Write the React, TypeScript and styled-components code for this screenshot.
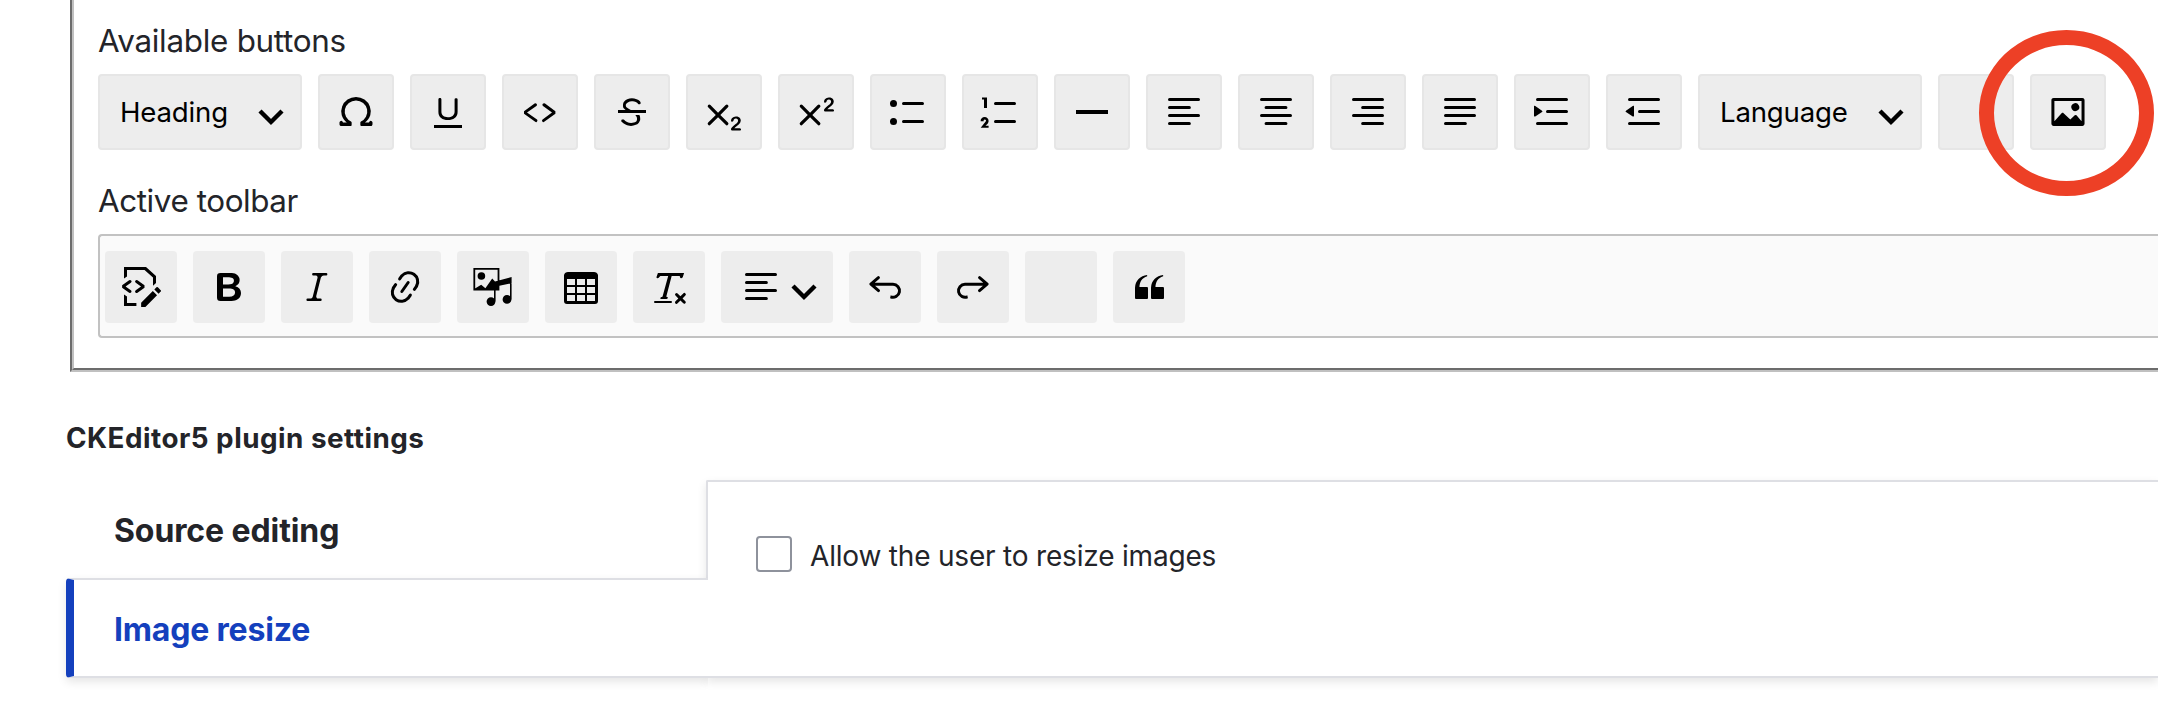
import React from "react";
import styled, { createGlobalStyle } from "styled-components";

const GlobalStyle = createGlobalStyle`
  * { box-sizing: border-box; }
  html, body { margin: 0; background: #fff; overflow: hidden; }
  body { font-family: Inter, "Liberation Sans", sans-serif; color: #232429; }
`;

const Page = styled.main`
  position: relative;
  width: 2158px;
  height: 710px;
  overflow: hidden;
  padding-left: 66px;
`;

const ToolbarGroup = styled.section`
  margin-left: 4px;
  height: 372px;
  padding: 21px 0 0 24px;
  border-left: 4px groove #c0c0c0;
  border-bottom: 4px groove #c0c0c0;
`;

const GroupLabel = styled.div<{ $spacing: number }>`
  font-size: 31.4px;
  line-height: 40px;
  letter-spacing: ${(p) => p.$spacing}px;
  white-space: nowrap;
`;

const AvailableRow = styled.div`
  display: flex;
  gap: 16px;
  margin: 13px 0 31px;
`;

const ToolButton = styled.button<{ $width?: number }>`
  flex: none;
  display: flex;
  align-items: center;
  width: ${(p) => p.$width ?? 76}px;
  height: 76px;
  margin: 0;
  padding: 0 16px;
  color: #000;
  font: 27.6px Inter, "Liberation Sans", sans-serif;
  background: #ededed;
  border: 2px solid #e6e6e6;
  border-radius: 4px;
`;

const DropdownButton = styled(ToolButton)`
  justify-content: space-between;
  padding: 0 16px 0 20px;
  letter-spacing: -0.18px;
`;

const ActiveBar = styled.div`
  display: flex;
  gap: 16px;
  height: 104px;
  margin-top: 13px;
  padding: 15px 5px 13px;
  background: #fafafa;
  border: 2px solid #c2c2c2;
  border-right: 0;
  border-radius: 4px 0 0 4px;
`;

const ActiveButton = styled(ToolButton)`
  height: 72px;
  width: ${(p) => p.$width ?? 72}px;
  border: 0;
`;

const AlignDropdown = styled(ActiveButton)`
  justify-content: space-between;
  padding: 0 16px 0 20px;
`;

const Icon = styled.svg`
  flex: none;
  display: block;
  width: 40px;
  height: 40px;
`;

const ChevronIcon = styled.svg`
  flex: none;
  display: block;
  width: 26px;
  height: 18px;
  margin-top: 9px;
`;

const SettingsTitle = styled.h3`
  margin: 47px 0 23px;
  font-size: 27.8px;
  line-height: 38px;
  font-weight: 700;
  letter-spacing: 0.5px;
`;

const Settings = styled.section`
  display: flex;
  height: 198px;
`;

const TabList = styled.div`
  position: relative;
  z-index: 1;
  width: 642px;
  margin-right: -2px;
`;

const Tab = styled.div<{ $active?: boolean }>`
  display: flex;
  align-items: center;
  height: ${(p) => (p.$active ? 100 : 98)}px;
  padding-left: ${(p) => (p.$active ? 40 : 48)}px;
  padding-top: 2px;
  font-size: 32px;
  font-weight: 700;
  letter-spacing: ${(p) => (p.$active ? -0.18 : -0.1)}px;
  color: ${(p) => (p.$active ? "#1440bd" : "#232429")};
  ${(p) =>
    p.$active &&
    `
    background: #fff;
    border: 2px solid #dedfe4;
    border-left: 8px solid #1440bd;
    border-right: 0;
    border-radius: 4px 0 0 4px;
    box-shadow: 0 4px 10px rgba(0, 0, 0, 0.1);
    clip-path: inset(-8px 0 -20px -20px);
  `}
`;

const Panel = styled.div`
  flex: 1;
  height: 198px;
  padding: 54px 0 0 48px;
  background: #fff;
  border: 2px solid #dedfe4;
  border-right: 0;
  border-radius: 2px 0 0 0;
  box-shadow: 0 4px 10px rgba(0, 0, 0, 0.1);
`;

const CheckRow = styled.label`
  display: flex;
  gap: 18px;
  font-size: 28px;
  line-height: 40px;
  letter-spacing: -0.19px;
`;

const Checkbox = styled.input`
  appearance: none;
  width: 36px;
  height: 36px;
  margin: 0;
  background: #fff;
  border: 2px solid #8e929c;
  border-radius: 4px;
`;

const Highlight = styled.div`
  position: absolute;
  left: 1979px;
  top: 30px;
  width: 175px;
  height: 166px;
  border: 15px solid #ed4026;
  border-radius: 50%;
`;

const TWO =
  "h2.549c.254 0 .447.05.58.152a.49.49 0 0 1 .201.413.54.54 0 0 1-.159.393c-.105.108-.266.162-.48.162h-3.594c-.245 0-.435-.066-.572-.197a.621.621 0 0 1-.205-.463c0-.114.044-.265.132-.453a1.62 1.62 0 0 1 .288-.444c.433-.436.824-.81 1.172-1.122.348-.312.597-.517.747-.615.267-.183.49-.368.667-.553.177-.185.312-.375.405-.57.093-.194.139-.384.139-.57a1.008 1.008 0 0 0-.554-.917 1.197 1.197 0 0 0-.56-.133c-.426 0-.761.182-1.005.546a2.332 2.332 0 0 0-.164.39 1.609 1.609 0 0 1-.258.488c-.096.114-.237.17-.423.17a.558.558 0 0 1-.405-.156.568.568 0 0 1-.161-.427c0-.218.05-.446.151-.683.101-.238.252-.453.452-.646s.454-.349.762-.467a2.998 2.998 0 0 1 1.081-.178c.498 0 .923.076 1.274.228a1.916 1.916 0 0 1 1.004 1.032 1.984 1.984 0 0 1-.156 1.794c-.2.32-.405.572-.613.754-.208.182-.558.468-1.048.857-.49.39-.826.691-1.008.906a2.703 2.703 0 0 0-.24.309z";
const CROSS =
  "m7.03 10.349 3.818-3.819a.8.8 0 1 1 1.132 1.132L8.16 11.48l3.819 3.818a.8.8 0 1 1-1.132 1.132L7.03 12.61l-3.818 3.82a.8.8 0 1 1-1.132-1.132L5.9 11.48 2.08 7.662A.8.8 0 1 1 3.212 6.53l3.818 3.82z";

const bar = (x1: number, x2: number, y: number) =>
  `M${x1 + 0.75} ${y - 0.75}H${x2 - 0.75}a.75.75 0 0 1 0 1.5H${x1 + 0.75}a.75.75 0 0 1 0-1.5z`;

const dot = (cx: number, cy: number, r: number) =>
  `M${cx - r} ${cy}a${r} ${r} 0 1 1 ${2 * r} 0 ${r} ${r} 0 1 1 ${-2 * r} 0z`;

const paths = {
  omega:
    "M10 2.5a7.47 7.47 0 0 1 4.231 1.31 7.268 7.268 0 0 1 2.703 3.454 7.128 7.128 0 0 1 .199 4.353c-.39 1.436-1.475 2.72-2.633 3.677h2.013c0-.226.092-.443.254-.603a.876.876 0 0 1 1.229 0c.163.16.254.377.254.603v.853c0 .209-.078.41-.22.567a.873.873 0 0 1-.547.28l-.101.006h-4.695a.517.517 0 0 1-.516-.518v-1.265c0-.21.128-.398.317-.489a5.601 5.601 0 0 0 2.492-2.371 5.459 5.459 0 0 0 .552-3.693 5.53 5.53 0 0 0-1.955-3.2A5.71 5.71 0 0 0 10 4.206 5.708 5.708 0 0 0 6.419 5.46 5.527 5.527 0 0 0 4.46 8.663a5.457 5.457 0 0 0 .554 3.695 5.6 5.6 0 0 0 2.497 2.37.55.55 0 0 1 .317.493v1.264c0 .286-.23.518-.516.518H2.618a.877.877 0 0 1-.614-.25.845.845 0 0 1-.254-.603v-.853c0-.226.091-.443.254-.603a.876.876 0 0 1 1.228 0c.163.16.255.377.255.603h1.925c-1.158-.958-2.155-2.241-2.545-3.678a7.128 7.128 0 0 1 .199-4.352 7.268 7.268 0 0 1 2.703-3.455A7.475 7.475 0 0 1 10 2.5z",
  underline:
    "M3 18v-1.5h14V18H3zm2.2-8V3.6c0-.4.4-.6.8-.6.3 0 .7.2.7.6v6.2c0 2 1.3 2.8 3.2 2.8 1.9 0 3.4-.9 3.4-2.9V3.6c0-.3.4-.5.8-.5.3 0 .7.2.7.5V10c0 2.7-2.2 4-4.9 4-2.6 0-4.7-1.2-4.7-4z",
  code: "m12.5 5.7 5.2 3.9v1.3l-5.6 4c-.1.2-.3.2-.5.2-.3-.1-.6-.7-.6-1l.3-.4 4.7-3.5L11.5 7l-.2-.2c-.1-.3-.1-.6 0-.8.2-.2.5-.4.8-.4a.8.8 0 0 1 .4.1zm-5.2 0L2 9.6v1.3l5.6 4c.1.2.3.2.5.2.3-.1.7-.7.6-1 0-.1 0-.3-.2-.4l-5-3.5L8.2 7l.2-.2c.1-.3.1-.6 0-.8-.2-.2-.5-.4-.8-.4a.8.8 0 0 0-.3.1z",
  strike:
    "M7 16.4c-.8-.4-1.5-.9-2.2-1.5a.6.6 0 0 1-.2-.5l.3-.6h1c1 1.2 2.1 1.7 3.7 1.7 1 0 1.8-.3 2.3-.6.6-.4.6-1.2.6-1.3.2-1.2-.9-2.1-.9-2.1h2.1c.3.7.4 1.2.4 1.7v.8l-.6 1.2c-.6.8-1.1 1-1.6 1.2a6 6 0 0 1-2.4.6c-1 0-1.8-.3-2.5-.6zM6.8 9 6 8.3c-.4-.5-.5-.8-.5-1.6 0-.7.1-1.3.5-1.8.4-.6 1-1 1.6-1.3a6.3 6.3 0 0 1 4.7 0 4 4 0 0 1 1.7 1l.3.7c0 .1.2.4-.2.7-.4.2-.9.1-1 0a3 3 0 0 0-1.2-1c-.4-.2-1-.3-2-.4-.7 0-1.4.2-2 .6-.8.6-1 .8-1 1.5 0 .8.5 1 1.2 1.5.6.4 1.1.7 1.9 1H6.8zM3 10.5V9h14v1.5z",
  subscript: CROSS + "M15.177 18.178" + TWO,
  superscript: CROSS + "M15.677 8.678" + TWO,
  bulleted: bar(7, 18, 5.75) + bar(7, 18, 14.75) + dot(2.75, 5.75, 1.75) + dot(2.75, 14.75, 1.75),
  numbered:
    bar(7, 18, 5.75) + bar(7, 18, 14.75) +
    "M3.5 3v5H2V3.7H1v-1h2.5V3zM.343 17.857l2.59-3.257H2.92a.6.6 0 1 0-1.04 0H.302a2 2 0 1 1 3.995 0h-.001c-.048.405-.16.734-.333.988-.175.254-.59.692-1.244 1.312H4.3v1h-4l.043-.043z",
  rule: "M2 9h16v2H2z",
  alignLeft: bar(2, 18, 3.75) + bar(2, 13.43, 7.75) + bar(2, 18, 11.75) + bar(2, 13.43, 15.75),
  alignCenter: bar(2, 18, 3.75) + bar(4.28, 15.72, 7.75) + bar(2, 18, 11.75) + bar(4.28, 15.72, 15.75),
  alignRight: bar(2, 18, 3.75) + bar(6.57, 18, 7.75) + bar(2, 18, 11.75) + bar(6.57, 18, 15.75),
  justify: bar(2, 18, 3.75) + bar(2, 18, 7.75) + bar(2, 18, 11.75) + bar(2, 13.43, 15.75),
  indent:
    bar(2, 18, 3.75) + bar(7, 18, 9.75) + bar(2, 18, 15.75) +
    "M1.632 6.95 5.02 9.358a.4.4 0 0 1-.013.661l-3.39 2.207A.4.4 0 0 1 1 11.892V7.275a.4.4 0 0 1 .632-.326z",
  outdent:
    bar(2, 18, 3.75) + bar(7, 18, 9.75) + bar(2, 18, 15.75) +
    "M4.368 6.95.98 9.358a.4.4 0 0 0 .013.661l3.39 2.207A.4.4 0 0 0 5 11.892V7.275a.4.4 0 0 0-.632-.326z",
  image:
    "M6.91 10.54c.26-.23.64-.21.88.03l3.36 3.14 2.23-2.06a.64.64 0 0 1 .87 0l2.52 2.97V4.5H3.2v10.12l3.71-4.08zm10.27-7.51c.6 0 1.09.47 1.09 1.05v11.84c0 .59-.49 1.06-1.09 1.06H2.79c-.6 0-1.09-.47-1.09-1.06V4.08c0-.58.49-1.05 1.1-1.05h14.38zm-5.22 5.56a1.96 1.96 0 1 1 3.4-1.96 1.96 1.96 0 0 1-3.4 1.96z",
  source:
    "M1.5 0h11l5 4.5v3.5L16 9.43V5.2L11.77 1.5H3v3.25l-1.5 1zM1.5 13.75l1.5 1V18h4.7v1.5H1.5zM4.06 6.64a.75.75 0 0 1 .958 1.15l-.085.07L2.29 9.75l2.646 1.89c.302.216.4.62.232.951l-.058.095a.75.75 0 0 1-.951.232l-.095-.058-3.5-2.5V9.14l3.496-2.5zm4.194 6.22a.75.75 0 0 1-.958-1.149l.085-.07 2.643-1.89-2.646-1.89a.75.75 0 0 1-.232-.952l.058-.095a.75.75 0 0 1 .95-.232l.096.058 3.5 2.5v1.22l-3.496 2.5zm7.644-.836 2.122 2.122-5.825 5.809-2.125-.005.003-2.116zm2.539-1.847 1.414 1.414a.5.5 0 0 1 0 .707l-1.06 1.06-2.122-2.12 1.061-1.061a.5.5 0 0 1 .707 0z",
  bold: "M10.187 17H5.773c-.637 0-1.092-.138-1.364-.415-.273-.277-.409-.718-.409-1.323V4.738c0-.617.14-1.062.419-1.332.279-.27.73-.406 1.354-.406h4.68c.69 0 1.288.041 1.793.124.506.083.96.242 1.36.478.341.197.644.447.906.75a3.262 3.262 0 0 1 .808 2.162c0 1.401-.722 2.426-2.167 3.075C15.05 10.175 16 11.315 16 13.01a3.756 3.756 0 0 1-2.296 3.504 6.1 6.1 0 0 1-1.517.377c-.571.073-1.238.11-2 .11zm-.217-6.217H7v4.087h3.069c1.977 0 2.965-.69 2.965-2.072 0-.707-.256-1.22-.768-1.537-.512-.319-1.277-.478-2.296-.478zM7 5.13v3.619h2.606c.729 0 1.292-.067 1.69-.2a1.6 1.6 0 0 0 .91-.765c.165-.267.247-.566.247-.897 0-.707-.26-1.176-.778-1.409-.519-.232-1.31-.348-2.375-.348H7z",
  italic:
    "m9.586 14.633.021.004c-.036.335.095.655.393.962.082.083.173.15.274.201h1.474a.6.6 0 1 1 0 1.2H5.304a.6.6 0 0 1 0-1.2h1.15c.474-.07.809-.182 1.005-.334.157-.122.291-.32.404-.597l2.416-9.55a1.053 1.053 0 0 0-.281-.823 1.12 1.12 0 0 0-.442-.296H8.15a.6.6 0 0 1 0-1.2h6.443a.6.6 0 1 1 0 1.2h-1.195c-.376.056-.65.155-.823.296-.215.175-.423.439-.623.79l-2.366 9.347z",
  link: "m11.077 15 .991-1.416a.75.75 0 1 1 1.229.86l-1.148 1.64a.748.748 0 0 1-.217.206 5.251 5.251 0 0 1-8.503-5.955.741.741 0 0 1 .12-.274l1.147-1.639a.75.75 0 1 1 1.228.86L4.933 10.7l.006.003a3.75 3.75 0 0 0 6.132 4.294l.006.004zm5.494-5.335a.748.748 0 0 1-.12.274l-1.147 1.639a.75.75 0 1 1-1.228-.86l.86-1.23a3.75 3.75 0 0 0-6.144-4.301l-.86 1.229a.75.75 0 0 1-1.229-.86l1.148-1.64a.748.748 0 0 1 .217-.206 5.251 5.251 0 0 1 8.503 5.955zm-4.563-2.532a.75.75 0 0 1 .184 1.045l-3.155 4.505a.75.75 0 1 1-1.229-.86l3.155-4.506a.75.75 0 0 1 1.045-.184z",
  media:
    "M.2.5h13v11.3H.2zM1.1 1.4v9.5h11.2V1.4z" +
    "M1 11.2V10.8L4.1 8.9 6.2 10.6 9.6 5.8 11 7.3 19.3 5V8.1L13.2 9.4V11.2z" +
    "M10.5 11h.8v6.3h-.8zM18.5 7h.8v9.2h-.8z" +
    dot(4.2, 4.5, 1.9) + dot(9, 17.3, 2.2) + dot(17, 16.2, 2.2),
  table:
    "M3 6v3h4V6H3zm0 4v3h4v-3H3zm0 4v3h4v-3H3zm5 3h4v-3H8v3zm5 0h4v-3h-4v3zm4-4v-3h-4v3h4zm0-4V6h-4v3h4zm1.5 8a1.5 1.5 0 0 1-1.5 1.5H3A1.5 1.5 0 0 1 1.5 17V4c.222-.863 1.068-1.5 2-1.5h13c.932 0 1.778.637 2 1.5v13zM12 13v-3H8v3h4zm0-4V6H8v3h4z",
  removeFormat:
    "M8.69 14.915c.053.052.173.083.36.093a.366.366 0 0 1 .345.485l-.003.01a.738.738 0 0 1-.697.497h-2.67a.374.374 0 0 1-.353-.496l.013-.038a.681.681 0 0 1 .644-.458c.197-.012.325-.043.386-.093a.28.28 0 0 0 .072-.11L9.592 4.5H6.269c-.359-.017-.609.013-.75.09-.142.078-.289.265-.442.563-.192.29-.516.464-.864.464H4.17a.43.43 0 0 1-.407-.569L4.46 3h13.08l-.62 2.043a.81.81 0 0 1-.775.574h-.114a.486.486 0 0 1-.486-.486c.001-.284-.054-.464-.167-.54-.112-.076-.367-.106-.766-.091h-3.28l-2.68 10.257c-.006.074.007.127.038.158zM3 17h8a.5.5 0 1 1 0 1H3a.5.5 0 1 1 0-1zm11.299 1.17a.75.75 0 1 1-1.06-1.06l1.414-1.415-1.415-1.414a.75.75 0 0 1 1.06-1.06l1.415 1.414 1.414-1.415a.75.75 0 1 1 1.06 1.06l-1.413 1.415 1.414 1.415a.75.75 0 0 1-1.06 1.06l-1.415-1.414-1.414 1.414z",
  undo: "m5.042 9.367 2.189 1.837a.75.75 0 0 1-.965 1.149l-3.788-3.18a.747.747 0 0 1-.21-.284.75.75 0 0 1 .17-.945L6.23 4.762a.75.75 0 1 1 .964 1.15L4.863 7.866h8.917A.75.75 0 0 1 14 7.9a4 4 0 1 1-1.477 7.718l.344-1.489a2.5 2.5 0 1 0 1.094-4.73l.008-.032H5.042z",
  redo: "m14.958 9.367-2.189 1.837a.75.75 0 0 0 .965 1.149l3.788-3.18a.747.747 0 0 0 .21-.284.75.75 0 0 0-.17-.945L13.77 4.762a.75.75 0 1 0-.964 1.15l2.331 1.955H6.22A.75.75 0 0 0 6 7.9a4 4 0 1 0 1.477 7.718l-.344-1.489A2.5 2.5 0 1 1 6.039 9.4l-.008-.032h8.927z",
  quote:
    "M3 10.423a6.5 6.5 0 0 1 6.056-6.408l.038.67C6.448 5.423 5.354 7.663 5.22 10H9c.552 0 .5.432.5.986v4.511c0 .554-.448.503-1 .503h-5c-.552 0-.5-.449-.5-1.003v-4.574zm8 0a6.5 6.5 0 0 1 6.056-6.408l.038.67c-2.646.739-3.74 2.979-3.873 5.315H17c.552 0 .5.432.5.986v4.511c0 .554-.448.503-1 .503h-5c-.552 0-.5-.449-.5-1.003v-4.574z",
};

type IconName = keyof typeof paths;

const ToolIcon = ({ name }: { name: IconName }) => (
  <Icon viewBox="0 0 20 20" aria-hidden="true">
    <path d={paths[name]} fill="currentColor" />
  </Icon>
);

const Chevron = () => (
  <ChevronIcon viewBox="0 0 26 18" aria-hidden="true">
    <path d="M2 3l11 11 11-11" fill="none" stroke="currentColor" strokeWidth="4.4" />
  </ChevronIcon>
);

const available: IconName[] = [
  "omega", "underline", "code", "strike", "subscript", "superscript", "bulleted",
  "numbered", "rule", "alignLeft", "alignCenter", "alignRight", "justify", "indent", "outdent",
];
const activeStart: IconName[] = ["source", "bold", "italic", "link", "media", "table", "removeFormat"];

export default function App() {
  return (
    <>
      <GlobalStyle />
      <Page>
        <ToolbarGroup>
          <GroupLabel $spacing={-0.28}>Available buttons</GroupLabel>
          <AvailableRow>
            <DropdownButton $width={204}>
              Heading
              <Chevron />
            </DropdownButton>
            {available.map((name) => (
              <ToolButton key={name} aria-label={name}>
                <ToolIcon name={name} />
              </ToolButton>
            ))}
            <DropdownButton $width={224}>
              Language
              <Chevron />
            </DropdownButton>
            <ToolButton />
            <ToolButton aria-label="image">
              <ToolIcon name="image" />
            </ToolButton>
          </AvailableRow>
          <GroupLabel $spacing={-0.42}>Active toolbar</GroupLabel>
          <ActiveBar>
            {activeStart.map((name) => (
              <ActiveButton key={name} aria-label={name}>
                <ToolIcon name={name} />
              </ActiveButton>
            ))}
            <AlignDropdown $width={112} aria-label="alignment">
              <ToolIcon name="alignLeft" />
              <Chevron />
            </AlignDropdown>
            <ActiveButton aria-label="undo"><ToolIcon name="undo" /></ActiveButton>
            <ActiveButton aria-label="redo"><ToolIcon name="redo" /></ActiveButton>
            <ActiveButton />
            <ActiveButton aria-label="quote"><ToolIcon name="quote" /></ActiveButton>
          </ActiveBar>
        </ToolbarGroup>
        <SettingsTitle>CKEditor5 plugin settings</SettingsTitle>
        <Settings>
          <TabList>
            <Tab>Source editing</Tab>
            <Tab $active>Image resize</Tab>
          </TabList>
          <Panel>
            <CheckRow>
              <Checkbox type="checkbox" />
              Allow the user to resize images
            </CheckRow>
          </Panel>
        </Settings>
        <Highlight />
      </Page>
    </>
  );
}
